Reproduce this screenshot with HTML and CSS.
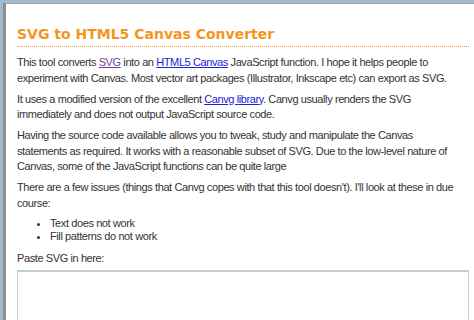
FILE: index.html
```html
<!DOCTYPE html>
<html lang="en">
<head>
    <meta charset="UTF-8">
    <meta name="viewport" content="width=device-width, initial-scale=1.0">
    <title>SVG to HTML5 Canvas Converter</title>
    <link rel="stylesheet" href="styles.css">
</head>
<body>
    <div class="page">
        <h1 class="page-title">SVG to HTML5 Canvas Converter</h1>

        <p>This tool converts <a href="#" class="visited">SVG</a> into an <a href="#">HTML5 Canvas</a> JavaScript function. I hope it helps people to experiment with Canvas. Most vector art packages (Illustrator, Inkscape etc) can export as SVG.</p>

        <p>It uses a modified version of the excellent <a href="#">Canvg library</a>. Canvg usually renders the SVG immediately and does not output JavaScript source code.</p>

        <p>Having the source code available allows you to tweak, study and manipulate the Canvas statements as required. It works with a reasonable subset of SVG. Due to the low-level nature of Canvas, some of the JavaScript functions can be quite large</p>

        <p>There are a few issues (things that Canvg copes with that this tool doesn't). I'll look at these in due course:</p>

        <ul class="issues">
            <li>Text does not work</li>
            <li>Fill patterns do not work</li>
        </ul>

        <p class="paste-label">Paste SVG in here:</p>
        <textarea class="svg-input"></textarea>
    </div>
</body>
</html>
```

FILE: styles.css
```css
* {
    margin: 0;
    padding: 0;
    box-sizing: border-box;
}

body {
    font-family: 'Liberation Sans', Arial, sans-serif;
    font-size: 11px;
    letter-spacing: -0.4px;
    line-height: 15.5px;
    color: #333;
    background-color: #a3b7cd;
    overflow: hidden;
}

.page {
    margin: 3px 0 0 3px;
    background-color: #fff;
    border-top: 1px solid #a4a4a4;
    border-left: 3px solid #8e8e8e;
    padding: 20px 11px 0 11px;
    min-height: 400px;
}

.page-title {
    font-family: 'DejaVu Sans', Verdana, sans-serif;
    font-size: 14px;
    font-weight: bold;
    letter-spacing: 0;
    line-height: 20px;
    color: #f2961d;
    border-bottom: 1px dotted #ee9a3a;
    padding-bottom: 2px;
    margin: 0 -6px 8px 0;
}

p {
    margin-bottom: 5.5px;
}

a {
    color: #2020d8;
}

a.visited {
    color: #7040a0;
}

.issues {
    margin: 0 0 8px 33px;
    line-height: 13px;
}

.paste-label {
    margin-bottom: 4px;
}

.svg-input {
    display: block;
    width: 452px;
    height: 120px;
    border: 1px solid #c2ccd4;
    border-top-width: 2px;
    resize: none;
}
```
